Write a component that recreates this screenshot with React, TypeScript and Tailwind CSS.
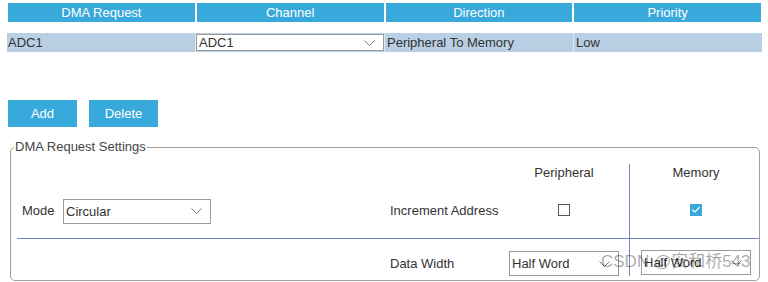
import { Check } from 'lucide-react';

const headers = ['DMA Request', 'Channel', 'Direction', 'Priority'];

function Chevron() {
	return (
		<svg width="11" height="6" viewBox="0 0 11 6" fill="none" stroke="#7a7a7a" strokeWidth="1">
			<path d="M0.5 0.5 L5.5 5.5 L10.5 0.5" />
		</svg>
	);
}

function Select({ value, className = '' }: { value: string; className?: string }) {
	return (
		<div
			className={`flex items-center justify-between border border-[#9a9a9a] bg-white pl-[2px] pr-[8px] leading-[15px] text-[#333] ${className}`}
		>
			<span>{value}</span>
			<Chevron />
		</div>
	);
}

function Checkbox({ checked }: { checked: boolean }) {
	if (checked) {
		return (
			<span className="flex h-[12px] w-[12px] items-center justify-center bg-[#38a9db]">
				<Check className="h-[10px] w-[10px] text-white" strokeWidth={3} />
			</span>
		);
	}
	return <span className="block h-[12px] w-[12px] border border-[#555]" />;
}

export default function App() {
	return (
		<div className="relative h-[282px] w-[768px] overflow-hidden bg-white pt-[3px] font-['Liberation_Sans',Arial,sans-serif] text-[13px] text-[#333]">
			{/* request table */}
			<div className="ml-[8px] grid w-[753px] grid-cols-4 gap-[2px] text-white">
				{headers.map((h) => (
					<div key={h} className="flex h-[19px] items-center justify-center bg-[#38a9db] leading-none">
						{h}
					</div>
				))}
			</div>
			<div className="ml-[7px] mt-[11px] grid h-[19px] w-[755px] grid-cols-4 grid-rows-[19px] gap-[1px] overflow-hidden bg-[#dfe8f1] leading-[15px]">
				<div className="flex items-center bg-[#b9cfe4] pl-[1px]">ADC1</div>
				<div className="flex items-center bg-[#b9cfe4] py-[1px]">
					<Select value="ADC1" className="h-[17px] w-full pr-[4px]" />
				</div>
				<div className="flex items-center bg-[#b9cfe4] pl-[2px]">Peripheral To Memory</div>
				<div className="flex items-center bg-[#b9cfe4] pl-[2px]">Low</div>
			</div>

			{/* buttons */}
			<div className="ml-[8px] mt-[48px] flex gap-[12px]">
				<button className="h-[27px] w-[69px] bg-[#38a9db] text-white">Add</button>
				<button className="h-[27px] w-[69px] bg-[#38a9db] text-white">Delete</button>
			</div>

			{/* settings */}
			<fieldset className="ml-[10px] mt-[12px] w-[750px] rounded-[5px] border border-[#a0a0a0] pb-[4px]">
				<legend className="ml-[3px] px-[1px] leading-[16px] text-[#444]">DMA Request Settings</legend>
				<div className="ml-[6px] pt-[9px]">
					<div className="flex h-[18px] items-start">
						<div className="w-[367px]" />
						<div className="w-[125px]" />
						<div className="w-[120px] pr-[10px] text-center leading-[18px]">Peripheral</div>
						<div className="h-full w-[122px] border-l border-[#6a86c4] pl-[11px] text-center leading-[18px]">Memory</div>
					</div>
					<div className="flex h-[57px] items-stretch border-b border-[#6a86c4]">
						<div className="flex w-[367px] items-center pl-[5px] pt-[2px]">
							<span className="w-[41px]">Mode</span>
							<Select value="Circular" className="h-[25px] w-[148px]" />
						</div>
						<div className="flex w-[125px] items-center pl-[6px] pt-[2px]">Increment Address</div>
						<div className="flex w-[120px] items-center justify-center pr-[10px]">
							<Checkbox checked={false} />
						</div>
						<div className="flex w-[122px] items-center justify-center border-l border-[#6a86c4] pl-[11px]">
							<Checkbox checked />
						</div>
					</div>
					<div className="flex h-[37px] items-end">
						<div className="w-[367px]" />
						<div className="flex h-[25px] w-[125px] items-center pl-[6px]">Data Width</div>
						<div className="w-[120px] pr-[10px]">
							<Select value="Half Word" className="h-[25px] w-[110px]" />
						</div>
						<div className="h-full w-[122px] border-l border-[#6a86c4] pl-[11px] pt-[11px]">
							<Select value="Half Word" className="h-[25px] w-[110px]" />
						</div>
					</div>
				</div>
			</fieldset>

			{/* watermark */}
			<div className="pointer-events-none absolute left-[601px] top-[251px] font-['Liberation_Sans','Noto_Sans_CJK_SC',sans-serif] text-[17px] leading-[22px] text-black/35">
				CSDN @安和桥543
			</div>
		</div>
	);
}
